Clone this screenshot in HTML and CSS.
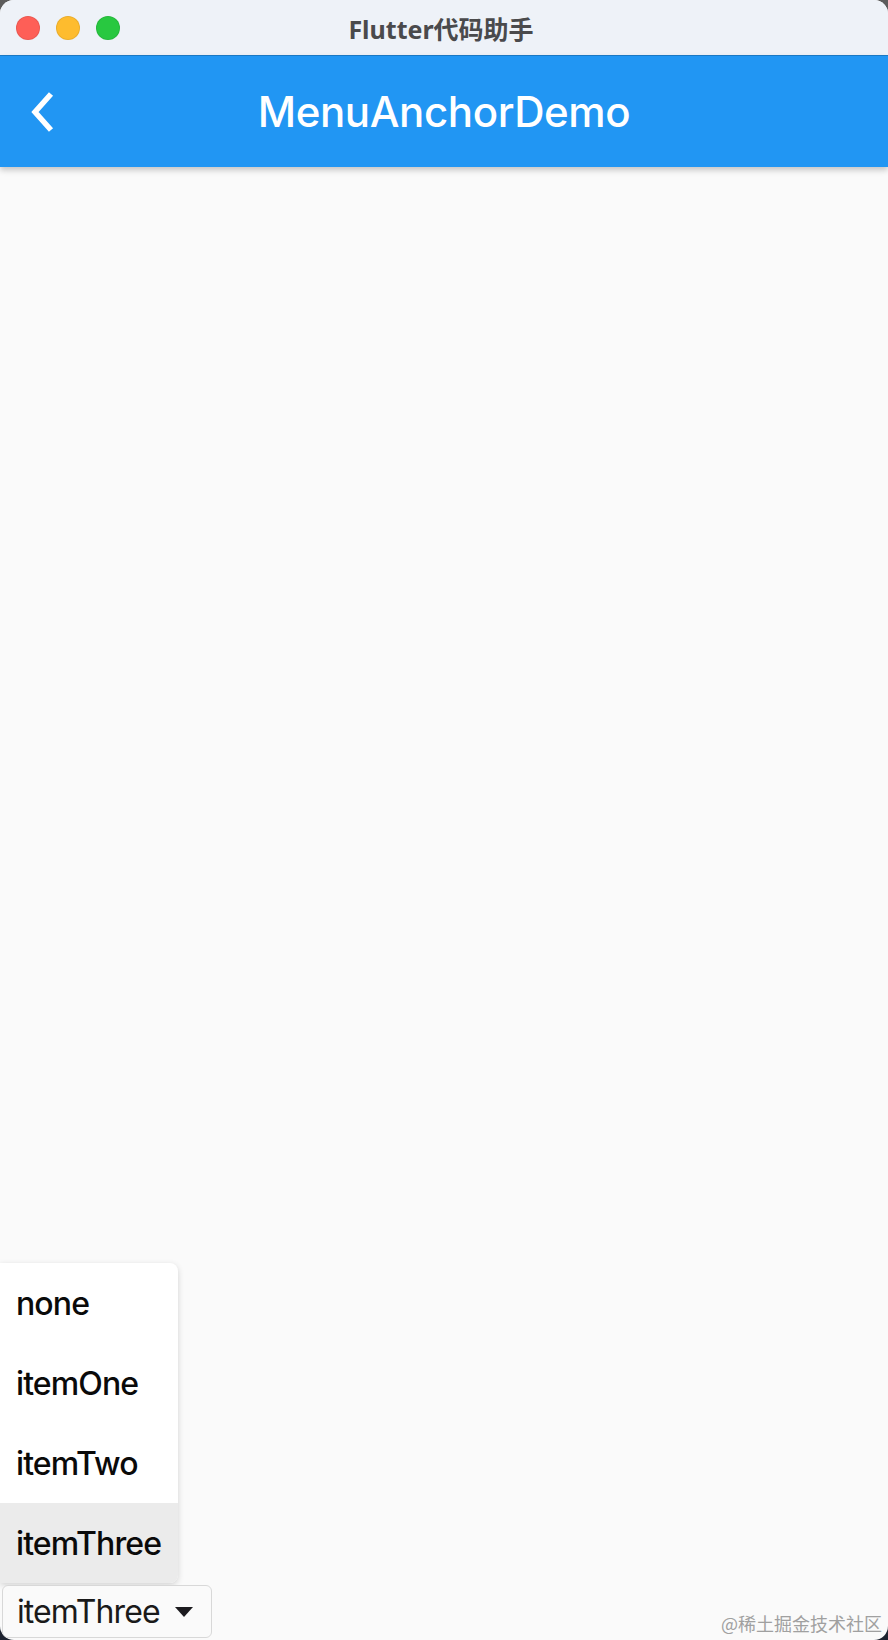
FILE: index.html
```html
<!DOCTYPE html>
<html lang="zh-CN">
  <head>
    <meta charset="UTF-8" />
    <meta name="viewport" content="width=device-width, initial-scale=1.0" />
    <title>Flutter代码助手</title>
    <link rel="stylesheet" href="styles.css">
  </head>
  <body>
    <div class="window">
      <div class="titlebar">
        <div class="lights">
          <span class="light red"></span>
          <span class="light yellow"></span>
          <span class="light green"></span>
        </div>
        <div class="window-title">Flutter代码助手</div>
        <div></div>
      </div>

      <header class="appbar">
        <button class="back" aria-label="Back">
          <svg width="30" height="46" viewBox="0 0 30 46">
            <path d="M24 5 L8 23 L24 41" fill="none" stroke="#fff" stroke-width="5.5" stroke-linecap="butt" stroke-linejoin="miter" />
          </svg>
        </button>
        <h1>MenuAnchorDemo</h1>
        <div></div>
      </header>

      <main class="content">
        <ul class="menu">
          <li>none</li>
          <li>itemOne</li>
          <li>itemTwo</li>
          <li class="active">itemThree</li>
        </ul>
        <button class="dropdown">
          <span>itemThree</span>
          <svg width="20" height="10" viewBox="0 0 20 10">
            <path d="M1 0 L19 0 L10 10 Z" fill="#1c1b1f" />
          </svg>
        </button>
        <div class="watermark">@稀土掘金技术社区</div>
      </main>
    </div>
  </body>
</html>
```

FILE: styles.css
```css
body {
  margin: 0;
  height: 1640px;
  background: linear-gradient(#5c5c5c 0%, #3a3d45 50%, #1d2330 100%);
  font-family: Inter, "Noto Sans", "Noto Sans CJK SC", sans-serif;
}

.window {
  height: 1640px;
  border-radius: 14px;
  overflow: hidden;
  display: flex;
  flex-direction: column;
  background-color: #fafafa;
}

.titlebar {
  height: 55px;
  flex: none;
  display: grid;
  grid-template-columns: 1fr auto 1fr;
  align-items: center;
  background-color: #eef2f8;
  border-bottom: 1px solid #1b7cc9;
}

.lights {
  display: flex;
  gap: 16px;
  padding-left: 16px;
}

.light {
  width: 24px;
  height: 24px;
  border-radius: 50%;
  box-sizing: border-box;
  border: 1px solid rgba(0, 0, 0, 0.08);
}

.red { background-color: #fe5f57; }
.yellow { background-color: #febc2e; }
.green { background-color: #28c840; }

.window-title {
  font-family: "Noto Sans", "Noto Sans CJK SC", sans-serif;
  font-size: 25px;
  font-weight: bold;
  color: #4a4a4c;
  margin-left: -6px;
}

.appbar {
  height: 111px;
  flex: none;
  display: grid;
  grid-template-columns: 1fr auto 1fr;
  align-items: center;
  background-color: #2196f3;
  box-shadow: 0 3px 6px rgba(0, 0, 0, 0.22);
  position: relative;
  z-index: 1;
}

.back {
  justify-self: start;
  margin-left: 27px;
  padding: 0;
  border: none;
  background: none;
  display: flex;
}

.appbar h1 {
  margin: 0;
  font-size: 42px;
  font-weight: 500;
  letter-spacing: -0.4px;
  color: #fff;
}

.content {
  flex: 1;
  position: relative;
  display: flex;
  flex-direction: column;
  align-items: flex-start;
  justify-content: flex-end;
  gap: 2px;
  padding-bottom: 2px;
}

.menu {
  list-style: none;
  margin: 0;
  padding: 0;
  width: 178px;
  background-color: #fff;
  border-radius: 0 8px 8px 0;
  box-shadow: 0 2px 6px rgba(0, 0, 0, 0.16);
  overflow: hidden;
}

.menu li {
  height: 80px;
  display: flex;
  align-items: center;
  padding-left: 16px;
  font-size: 32px;
  font-weight: 500;
  letter-spacing: -0.9px;
  color: #0a0a0a;
}

.menu li.active {
  background-color: #ebebeb;
}

.dropdown {
  margin-left: 2px;
  width: 210px;
  height: 53px;
  box-sizing: border-box;
  display: flex;
  align-items: center;
  gap: 14px;
  padding: 0 0 0 14px;
  border: 1px solid #d8d8d8;
  border-radius: 6px;
  background-color: #fafafa;
  font-family: inherit;
  font-size: 32px;
  letter-spacing: -0.9px;
  color: #1a1a1a;
}

.watermark {
  position: absolute;
  right: 6px;
  bottom: 4px;
  font-family: "Noto Sans CJK SC", sans-serif;
  font-size: 18px;
  color: #a0a0a0;
}
```
